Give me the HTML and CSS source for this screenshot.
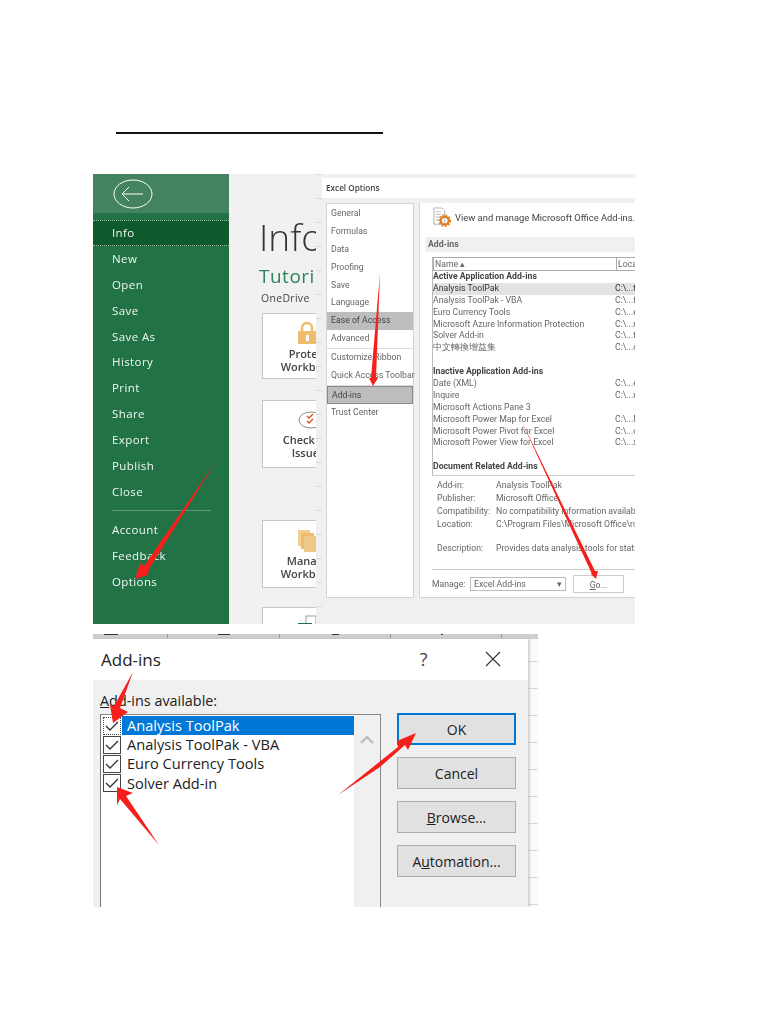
FILE: index.html
```html
<!DOCTYPE html>
<html lang="en">
<head>
    <meta charset="UTF-8">
    <title>Excel Add-ins</title>
    <link rel="stylesheet" href="styles.css">
</head>
<body>
    <div class="rule"></div>

    <div class="shot-top">
        <aside class="backstage">
            <div class="back-bar">
                <svg width="40" height="30" viewBox="0 0 40 30"><ellipse cx="20" cy="15" rx="19" ry="14" fill="none" stroke="#fff" stroke-width="1"/><path d="M30 15H9M16 8l-7 7 7 7" fill="none" stroke="#fff" stroke-width="1"/></svg>
            </div>
            <ul class="nav">
                <li class="current">Info</li>
                <li>New</li>
                <li>Open</li>
                <li>Save</li>
                <li>Save As</li>
                <li>History</li>
                <li>Print</li>
                <li>Share</li>
                <li>Export</li>
                <li>Publish</li>
                <li>Close</li>
            </ul>
            <div class="nav-sep"></div>
            <ul class="nav">
                <li>Account</li>
                <li>Feedback</li>
                <li>Options</li>
            </ul>
        </aside>

        <section class="info">
            <h1>Info</h1>
            <div class="doc-name">Tutori</div>
            <div class="doc-path">OneDrive</div>
            <div class="tile tile-protect">
                <svg class="tile-icon" width="18" height="24" viewBox="0 0 18 24"><path d="M4 11V7a5 5 0 0 1 10 0v4" fill="none" stroke="#eebc6c" stroke-width="2.5"/><rect x="0" y="10" width="18" height="13" fill="#eebc6c"/><rect x="8" y="14" width="3" height="6" fill="#fff"/></svg>
                <div class="tile-text">Protect<br>Workbook</div>
            </div>
            <div class="tile tile-check">
                <svg class="tile-icon" width="18" height="24" viewBox="0 0 18 24"><ellipse cx="13" cy="12" rx="12" ry="8" fill="none" stroke="#8c8c8c"/><path d="M9 8l2 2 4-4M9 13l2 2 4-4" fill="none" stroke="#e2502a" stroke-width="1.4"/></svg>
                <div class="tile-text">Check for<br>Issues</div>
            </div>
            <div class="tile tile-manage">
                <svg class="tile-icon" width="18" height="24" viewBox="0 0 18 24"><rect x="0" y="2" width="12" height="16" fill="#f3d08f"/><rect x="3" y="5" width="13" height="16" fill="#eebc6c"/><rect x="6" y="8" width="12" height="16" fill="#f0c98a"/></svg>
                <div class="tile-text">Manage<br>Workbook</div>
            </div>
            <div class="tile tile-last">
                <svg class="tile-icon" width="18" height="16" viewBox="0 0 18 16"><rect x="8" y="1" width="10" height="15" fill="#fff" stroke="#999"/><rect x="0" y="8" width="14" height="8" fill="#217346"/></svg>
            </div>
        </section>

        <section class="options">
            <div class="options-title">Excel Options</div>
            <div class="options-body">
                <ul class="opt-menu">
                    <li>General</li>
                    <li>Formulas</li>
                    <li>Data</li>
                    <li>Proofing</li>
                    <li>Save</li>
                    <li>Language</li>
                    <li class="hover">Ease of Access</li>
                    <li class="last-group">Advanced</li>
                    <li>Customize Ribbon</li>
                    <li class="last-group">Quick Access Toolbar</li>
                    <li class="active">Add-ins</li>
                    <li>Trust Center</li>
                </ul>
                <div class="opt-panel">
                    <div class="panel-head">
                        <svg width="20" height="22" viewBox="0 0 20 22"><path d="M1 1h9l3 3v15H1z" fill="#fff" stroke="#9a9a9a" stroke-width=".8"/><path d="M3 5h6M3 8h6M3 11h4M3 14h4" stroke="#9a9a9a" stroke-width=".7"/><circle cx="13" cy="15" r="4.5" fill="none" stroke="#e07b1c" stroke-width="2.6"/><circle cx="13" cy="15" r="6.4" fill="none" stroke="#e07b1c" stroke-width="1.4" stroke-dasharray="2 1.8"/></svg>
                        <span>View and manage Microsoft Office Add-ins.</span>
                    </div>
                    <div class="band">Add-ins</div>
                    <div class="addin-table">
                        <div class="table-head"><span class="col-name">Name ▴</span><span class="col-loc">Location</span></div>
                        <div class="row group">Active Application Add-ins</div>
                        <div class="row picked"><span class="col-name">Analysis ToolPak</span><span>C:\...t\</span></div>
                        <div class="row"><span class="col-name">Analysis ToolPak - VBA</span><span>C:\...fi</span></div>
                        <div class="row"><span class="col-name">Euro Currency Tools</span><span>C:\...e</span></div>
                        <div class="row"><span class="col-name">Microsoft Azure Information Protection</span><span>C:\...n</span></div>
                        <div class="row"><span class="col-name">Solver Add-in</span><span>C:\...t\</span></div>
                        <div class="row"><span class="col-name cjk">中文轉換增益集</span><span>C:\...o</span></div>
                        <div class="row empty"></div>
                        <div class="row group">Inactive Application Add-ins</div>
                        <div class="row"><span class="col-name">Date (XML)</span><span>C:\...e</span></div>
                        <div class="row"><span class="col-name">Inquire</span><span>C:\...n</span></div>
                        <div class="row"><span class="col-name">Microsoft Actions Pane 3</span></div>
                        <div class="row"><span class="col-name">Microsoft Power Map for Excel</span><span>C:\...M</span></div>
                        <div class="row"><span class="col-name">Microsoft Power Pivot for Excel</span><span>C:\...o</span></div>
                        <div class="row"><span class="col-name">Microsoft Power View for Excel</span><span>C:\...x</span></div>
                        <div class="row empty"></div>
                        <div class="row group">Document Related Add-ins</div>
                    </div>
                    <dl class="details">
                        <div><dt>Add-in:</dt><dd>Analysis ToolPak</dd></div>
                        <div><dt>Publisher:</dt><dd>Microsoft Office</dd></div>
                        <div><dt>Compatibility:</dt><dd>No compatibility information available</dd></div>
                        <div><dt>Location:</dt><dd>C:\Program Files\Microsoft Office\root\Office16</dd></div>
                        <div class="desc"><dt>Description:</dt><dd>Provides data analysis tools for statistical</dd></div>
                    </dl>
                    <div class="manage">
                        <span class="manage-label">Manage:</span>
                        <span class="select">Excel Add-ins<i>▾</i></span>
                        <span class="go"><u>G</u>o...</span>
                    </div>
                </div>
            </div>
        </section>

        <svg class="arrows" width="542" height="450" viewBox="93 174 542 450">
            <polygon fill="#f5201c" points="217,460 149,569 148,575 135,579 140,563 144,566"/>
            <polygon fill="#f5201c" points="380,273 376,378 378,378 373,386 369,378 371,378"/>
            <polygon fill="#f5201c" points="520,418 595,571 598,571 596,579 590,573 592,574"/>
        </svg>
    </div>

    <div class="shot-bottom">
        <div class="sheet-strip">
            <span class="strip-cell cell-a"><i></i></span>
            <span class="strip-cell cell-b"><i></i></span>
            <span class="strip-cell cell-c"><i></i></span>
            <span class="strip-cell cell-d"><i></i></span>
        </div>
        <div class="dialog">
            <div class="dialog-title">
                <span>Add-ins</span>
                <span class="help">?</span>
                <svg width="16" height="16" viewBox="0 0 16 16"><path d="M1 1l14 14M15 1L1 15" stroke="#333" stroke-width="1.1"/></svg>
            </div>
            <div class="dialog-body">
                <div class="dialog-left">
                    <div class="avail"><u>A</u>dd-ins available:</div>
                    <div class="listbox">
                        <ul class="checks">
                            <li class="selected"><span class="box"><svg width="14" height="10" viewBox="0 0 14 10"><path d="M1 5l4 4 8-8" fill="none" stroke="#333" stroke-width="1.3"/></svg></span><span class="label">Analysis ToolPak</span></li>
                            <li><span class="box"><svg width="14" height="10" viewBox="0 0 14 10"><path d="M1 5l4 4 8-8" fill="none" stroke="#333" stroke-width="1.3"/></svg></span><span class="label">Analysis ToolPak - VBA</span></li>
                            <li><span class="box"><svg width="14" height="10" viewBox="0 0 14 10"><path d="M1 5l4 4 8-8" fill="none" stroke="#333" stroke-width="1.3"/></svg></span><span class="label">Euro Currency Tools</span></li>
                            <li><span class="box"><svg width="14" height="10" viewBox="0 0 14 10"><path d="M1 5l4 4 8-8" fill="none" stroke="#333" stroke-width="1.3"/></svg></span><span class="label">Solver Add-in</span></li>
                        </ul>
                        <div class="scroll"><svg width="14" height="9" viewBox="0 0 14 9"><path d="M1 8l6-6 6 6" fill="none" stroke="#bdbdbd" stroke-width="2.4"/></svg></div>
                    </div>
                </div>
                <div class="buttons">
                    <button class="default">OK</button>
                    <button>Cancel</button>
                    <button><u>B</u>rowse...</button>
                    <button>A<u>u</u>tomation...</button>
                </div>
            </div>
        </div>
        <svg class="arrows" width="445" height="273" viewBox="93 634 445 273">
            <polygon fill="#f5201c" points="133,672 120,708 128,712 113,723 110,705 114,706"/>
            <polygon fill="#f5201c" points="159,845 126,796 133,793 117,787 117,805 120,799"/>
            <polygon fill="#f5201c" points="338,795 398,747 397,741 416,733 408,750 405,745 380,767"/>
        </svg>
    </div>
</body>
</html>
```

FILE: styles.css
```css
body {
    margin: 0;
    padding: 132px 0 0 93px;
    background: white;
    font-family: "Open Sans", sans-serif;
    color: #333;
}

ul {
    list-style: none;
    margin: 0;
    padding: 0;
}

.rule {
    width: 267px;
    height: 2px;
    margin-left: 23px;
    background: #111;
}

.arrows {
    position: absolute;
    left: 0;
    top: 0;
    pointer-events: none;
}

/* top screenshot */
.shot-top {
    position: relative;
    display: flex;
    width: 542px;
    height: 450px;
    margin-top: 40px;
    overflow: hidden;
}

.backstage {
    width: 136px;
    flex: none;
    background: #217346;
    color: #f2f7f4;
    font-size: 11.5px;
    letter-spacing: 0.4px;
    filter: blur(0.3px);
}

.back-bar {
    height: 39px;
    padding-left: 20px;
    display: flex;
    align-items: center;
    background: #44835f;
}

.nav li {
    height: 25.85px;
    line-height: 25.85px;
    padding-left: 19px;
}

.nav .current {
    height: 26px;
    line-height: 24px;
    margin-top: 7px;
    background: #0f5a2c;
    border-top: 1px dotted #9fb9a8;
    border-bottom: 1px dotted #9fb9a8;
    box-sizing: border-box;
}

.nav-sep {
    height: 1px;
    margin: 6px 18px 6px 19px;
    background: #5f9a78;
}

.info {
    width: 87px;
    flex: none;
    background: #f1f1f1;
    padding-left: 33px;
    box-sizing: border-box;
    overflow: hidden;
    filter: blur(0.3px);
}

.info h1 {
    margin: 42px 0 0 -3px;
    font-size: 37px;
    line-height: 42px;
    font-weight: 300;
    color: #333;
    white-space: nowrap;
}

.doc-name {
    margin: 6px 0 0 -3px;
    font-size: 19px;
    line-height: 24px;
    color: #2f8259;
    letter-spacing: 0.5px;
}

.doc-path {
    margin: 2px 0 0 -1px;
    font-size: 10.5px;
    line-height: 16px;
    letter-spacing: 0.3px;
    color: #444;
}

.tile {
    width: 92px;
    height: 66px;
    background: white;
    border: 1px solid #c6c6c6;
    box-sizing: border-box;
    text-align: center;
    font-size: 11px;
    line-height: 13px;
    font-weight: 600;
    color: #444;
}

.tile-protect { margin-top: 7px; }
.tile-check { margin-top: 21px; height: 68px; }
.tile-manage { margin-top: 52px; height: 68px; }
.tile-last { margin-top: 19px; height: 40px; }

.tile-icon {
    display: block;
    margin: 7px 0 0 35px;
}

.tile-text {
    margin-top: 2px;
    white-space: nowrap;
}

.tile-check .tile-text {
    margin-top: 1px;
}

.options {
    width: 319px;
    flex: none;
    box-sizing: border-box;
    padding: 4px 0 0 6px;
    background: repeating-linear-gradient(#dcdcdc 0 1px, #f0f0f0 1px 24px) 0 0 / 6px 100% no-repeat, #f0f0f0;
    color: #666;
    font-family: Roboto, sans-serif;
    font-size: 8.7px;
    filter: blur(0.3px);
}

.options-title {
    height: 20px;
    line-height: 20px;
    padding-left: 4px;
    background: white;
    color: #444;
    font-family: "Open Sans", sans-serif;
    font-size: 8.2px;
    font-weight: 600;
}

.options-body {
    display: flex;
    gap: 5px;
    margin-top: 5px;
    padding-left: 4px;
    height: 395px;
}

.opt-menu {
    width: 88px;
    flex: none;
    box-sizing: border-box;
    padding-top: 1px;
    background: white;
    border: 1px solid #d4d4d4;
}

.opt-menu li {
    height: 17.9px;
    line-height: 17.9px;
    padding-left: 4px;
    white-space: nowrap;
}

.opt-menu .hover {
    background: #bdbdbd;
    color: #444;
}

.opt-menu .last-group {
    height: 18px;
    border-bottom: 1px solid #ddd;
}

.opt-menu .active {
    background: #bdbdbd;
    border: 1px solid #8a8a8a;
    box-sizing: border-box;
    color: #444;
}

.opt-panel {
    flex: 1;
    min-width: 0;
    background: white;
    border-left: 1px solid #d4d4d4;
    border-bottom: 1px solid #d4d4d4;
    overflow: hidden;
    padding-left: 5px;
}

.panel-head {
    display: flex;
    align-items: center;
    gap: 4px;
    height: 26px;
    margin: 1px 0 7px 8px;
    font-size: 9.4px;
    color: #444;
    white-space: nowrap;
}

.band {
    height: 15px;
    line-height: 15px;
    padding-left: 3px;
    background: #f0f0f0;
    font-weight: 700;
}

.addin-table {
    height: 218px;
    margin: 5px 0 0 7px;
    border-left: 1px solid #bbb;
    border-bottom: 1px solid #ccc;
    overflow: hidden;
}

.table-head {
    display: flex;
    height: 14px;
    line-height: 13px;
    box-sizing: border-box;
    border: 1px solid #aaa;
    border-right: 0;
    white-space: nowrap;
}

.table-head .col-name {
    border-right: 1px solid #aaa;
    width: 181px;
}

.table-head span {
    flex: none;
    padding-left: 1px;
}

.row {
    display: flex;
    height: 11.9px;
    line-height: 11.9px;
    white-space: nowrap;
}

.row .col-name {
    width: 182px;
    flex: none;
}

.row.group {
    font-weight: 700;
    color: #444;
}

.row.picked {
    background: #e3e3e3;
    color: #333;
}

.details {
    margin: 3px 0 0 12px;
}

.details div {
    display: flex;
    height: 13px;
    line-height: 13px;
    white-space: nowrap;
}

.details .desc {
    margin-top: 11px;
}

.details dt {
    width: 59px;
    flex: none;
}

.details dd {
    margin: 0;
}

.manage {
    display: flex;
    align-items: center;
    margin: 14px 0 0 7px;
    padding-top: 5px;
    border-top: 1px solid #ccc;
}

.manage-label {
    width: 38px;
}

.select {
    display: flex;
    justify-content: space-between;
    width: 96px;
    height: 14px;
    line-height: 12px;
    box-sizing: border-box;
    padding: 0 3px;
    border: 1px solid #bbb;
}

.select i {
    font-style: normal;
}

.go {
    width: 51px;
    height: 18px;
    margin-left: 7px;
    line-height: 18px;
    box-sizing: border-box;
    text-align: center;
    border: 1px solid #ccc;
}

/* bottom screenshot */
.shot-bottom {
    position: relative;
    width: 445px;
    height: 273px;
    margin-top: 10px;
    overflow: hidden;
    background: repeating-linear-gradient(#d6d6d6 0 1px, #fbfbfb 1px 27px);
}

.sheet-strip {
    display: flex;
    height: 5px;
    background: #cfcfcf;
}

.strip-cell {
    box-sizing: border-box;
    height: 4px;
    border-right: 1px solid #9a9a9a;
}

.strip-cell i {
    display: block;
    height: 1px;
    background: #333;
}

.cell-a { width: 75px; padding-left: 11px; }
.cell-a i { width: 14px; }
.cell-b { width: 112px; padding-left: 50px; }
.cell-b i { width: 12px; }
.cell-c { width: 111px; padding-left: 52px; }
.cell-c i { width: 7px; }
.cell-d { width: 111px; padding-left: 50px; }
.cell-d i { width: 2px; }

.dialog {
    width: 435px;
    height: 268px;
    background: white;
    box-shadow: 1px 0 3px #bbb;
}

.dialog-title {
    display: flex;
    align-items: center;
    height: 40px;
    padding: 0 0 1px 8px;
    font-size: 17px;
    color: #222;
}

.dialog-title .help {
    margin-left: 259px;
    font-size: 18px;
    color: #444;
}

.dialog-title svg {
    margin-left: 57px;
}

.dialog-body {
    display: flex;
    height: 227px;
    background: #f0f0f0;
}

.dialog-left {
    width: 288px;
    padding-left: 7px;
    flex: none;
    box-sizing: border-box;
}

.avail {
    height: 34px;
    line-height: 42px;
    font-size: 14.4px;
    color: #222;
}

.listbox {
    display: flex;
    height: 194px;
    border-left: 1px solid #777;
    border-top: 1px solid #888;
    border-right: 1px solid #888;
    background: white;
}

.checks {
    flex: 1;
    padding-top: 1px;
}

.checks li {
    display: flex;
    align-items: center;
    height: 19.2px;
}

.box {
    display: flex;
    align-items: center;
    justify-content: center;
    width: 18px;
    height: 18px;
    margin-left: 2px;
    box-sizing: border-box;
    border: 1px solid #444;
    flex: none;
}

.label {
    flex: 1;
    height: 19px;
    line-height: 19px;
    margin-left: 1px;
    padding-left: 5px;
    font-size: 14.6px;
    color: #222;
}

.selected .label {
    background: #0078d7;
    color: white;
}

.selected .box {
    border-style: dotted;
}

.scroll {
    width: 26px;
    flex: none;
    background: #f0f0f0;
    padding: 12px 0 0 6px;
    box-sizing: border-box;
}

.buttons {
    display: flex;
    flex-direction: column;
    gap: 12px;
    margin: 33px 0 0 16px;
}

.buttons button {
    width: 119px;
    height: 32px;
    padding: 0;
    background: #e1e1e1;
    border: 1px solid #adadad;
    font-family: "Open Sans", sans-serif;
    font-size: 14px;
    color: #222;
}

.buttons .default {
    border: 2px solid #0078d7;
}
```
